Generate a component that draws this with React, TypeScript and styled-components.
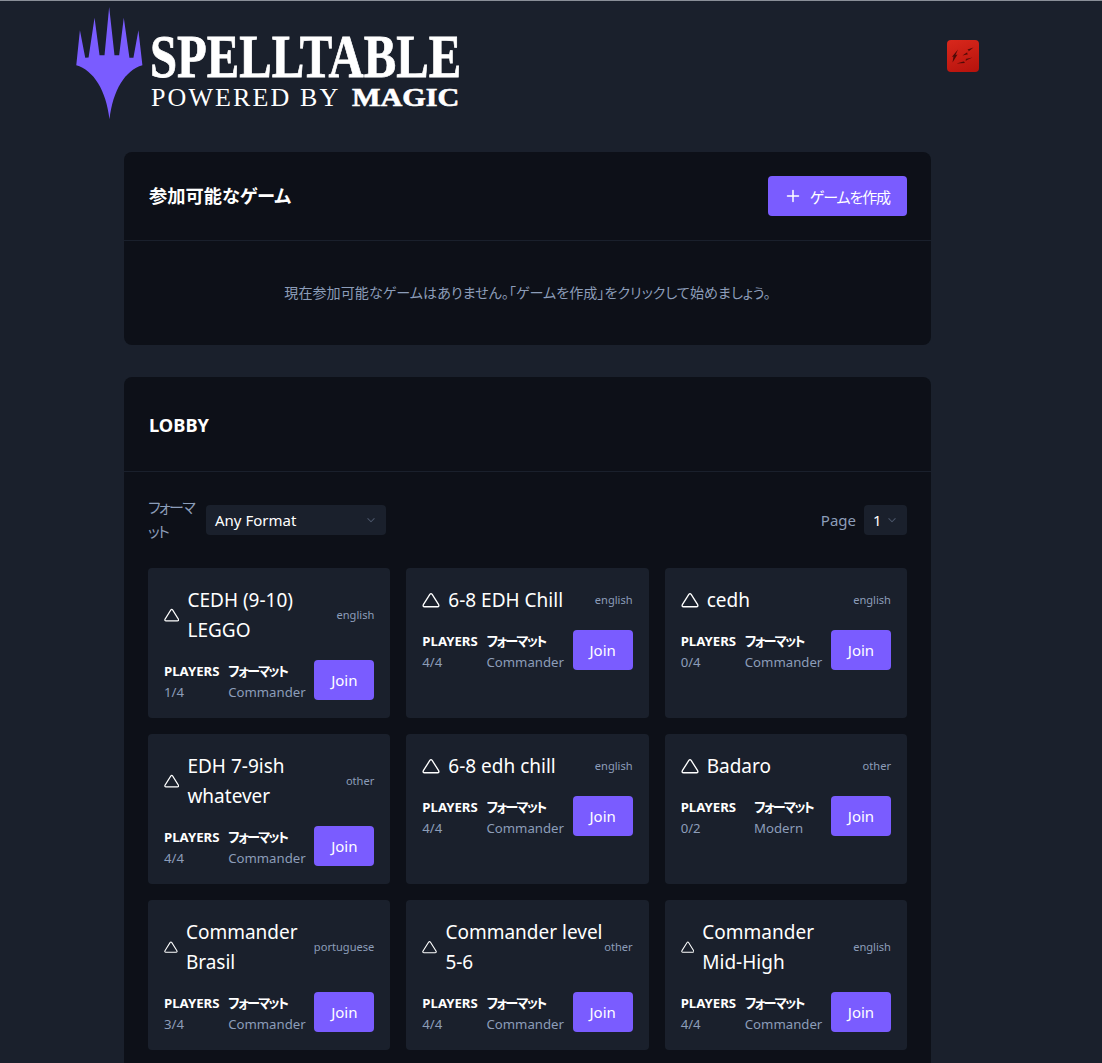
import { createGlobalStyle, styled } from "styled-components";

const FONT = `"Noto Sans", "Noto Sans CJK JP", sans-serif`;
const MUTED = "#8c9db9";

type Game = {
  title: string;
  language: string;
  players: string;
  format: string;
};

const games: Game[] = [
  { title: "CEDH (9-10) LEGGO", language: "english", players: "1/4", format: "Commander" },
  { title: "6-8 EDH Chill", language: "english", players: "4/4", format: "Commander" },
  { title: "cedh", language: "english", players: "0/4", format: "Commander" },
  { title: "EDH 7-9ish whatever", language: "other", players: "4/4", format: "Commander" },
  { title: "6-8 edh chill", language: "english", players: "4/4", format: "Commander" },
  { title: "Badaro", language: "other", players: "0/2", format: "Modern" },
  { title: "Commander Brasil", language: "portuguese", players: "3/4", format: "Commander" },
  { title: "Commander level 5-6", language: "other", players: "4/4", format: "Commander" },
  { title: "Commander Mid-High", language: "english", players: "4/4", format: "Commander" },
];

function Chevron() {
  return (
    <ChevronIcon viewBox="0 0 20 20" fill="none">
      <path d="M5.5 8l4.5 4.5L14.5 8" stroke="#4a5568" strokeWidth="1.5" strokeLinecap="round" strokeLinejoin="round" />
    </ChevronIcon>
  );
}

export default function App() {
  return (
    <>
      <GlobalStyle />
      <Page>
        <Header>
          <Logo>
            <LogoMark viewBox="18 10 200 340">
              <path
                d="M29 80 L45 163 L55 162 L73 42 L88 155 L103 155 L117 10 L133 155 L147 155 L161 42 L178 163 L190 163 L205 80 L217 185 C165 200 128 260 118 348 C108 260 70 200 18 185 Z"
                fill="#7a5cff"
              />
            </LogoMark>
            <LogoText>
              <LogoTitle>SPELLTABLE</LogoTitle>
              <LogoSub>
                POWERED BY <LogoMagic>MAGIC</LogoMagic>
              </LogoSub>
            </LogoText>
          </Logo>
          <Avatar>
            <svg viewBox="0 0 32 32" width="32" height="32">
              <g fill="#4f0a07">
                <path d="M11 9.5 L8.5 15 L10.5 14.5 L5.5 22.5 L6.5 16.5 L4.8 17 Z" />
                <path d="M26.5 7.5 L20.5 9.5 L22 11 L15.5 15.5 L21 14.2 L19.8 12.8 Z" />
                <path d="M25.5 17.5 L18.5 19 L20 20.5 L9.5 23.5 L18 23 L16.8 21.6 Z" />
              </g>
            </svg>
          </Avatar>
        </Header>

        <Main>
          <Panel>
            <PanelHeader>
              <PanelTitle>参加可能なゲーム</PanelTitle>
              <CreateButton>
                <svg viewBox="0 0 16 16" width="16" height="16" fill="none">
                  <path d="M8 2.5v11M2.5 8h11" stroke="#fff" strokeWidth="1.5" strokeLinecap="round" />
                </svg>
                ゲームを作成
              </CreateButton>
            </PanelHeader>
            <EmptyMessage>現在参加可能なゲームはありません。「ゲームを作成」をクリックして始めましょう。</EmptyMessage>
          </Panel>

          <Panel>
            <LobbyHeader>
              <PanelTitle>LOBBY</PanelTitle>
            </LobbyHeader>
            <LobbyBody>
              <Filters>
                <FormatFilter>
                  <FilterLabel>フォーマット</FilterLabel>
                  <FormatSelect>
                    Any Format
                    <Chevron />
                  </FormatSelect>
                </FormatFilter>
                <PageFilter>
                  <PageLabel>Page</PageLabel>
                  <PageSelect>
                    1
                    <Chevron />
                  </PageSelect>
                </PageFilter>
              </Filters>
              <GameGrid>
                {games.map((game) => (
                  <GameCard key={game.title}>
                    <CardTop>
                      <Triangle viewBox="0 0 20 18" fill="none">
                        <path
                          d="M8.7 2.7 Q10 0.9 11.3 2.7 L18.6 14.3 Q19.6 16.4 17.3 16.6 H2.7 Q0.4 16.4 1.4 14.3 Z"
                          stroke="#fff"
                          strokeWidth="1.5"
                          strokeLinejoin="round"
                        />
                      </Triangle>
                      <GameTitle>{game.title}</GameTitle>
                      <Language>{game.language}</Language>
                    </CardTop>
                    <CardBottom>
                      <Stat>
                        <StatLabel>PLAYERS</StatLabel>
                        <StatValue>{game.players}</StatValue>
                      </Stat>
                      <Stat>
                        <StatLabel $tight>フォーマット</StatLabel>
                        <StatValue>{game.format}</StatValue>
                      </Stat>
                      <JoinButton>Join</JoinButton>
                    </CardBottom>
                  </GameCard>
                ))}
              </GameGrid>
            </LobbyBody>
          </Panel>
        </Main>
      </Page>
    </>
  );
}

/** styles */

const GlobalStyle = createGlobalStyle`
  html, body {
    margin: 0;
    height: 1063px;
    overflow: hidden;
    background: #1a202c;
  }

  body {
    border-top: 1px solid #8a8f98;
    box-sizing: border-box;
    font-family: ${FONT};
    font-feature-settings: "palt";
    color: #fff;
  }

  button {
    font-family: inherit;
    font-feature-settings: inherit;
    border: 0;
    cursor: pointer;
  }
`;

const Page = styled.div`
  display: flex;
  flex-direction: column;
  padding: 0 123px 0 76px;
`;

const Header = styled.header`
  display: flex;
  align-items: flex-start;
  justify-content: space-between;
  height: 151px;
  box-sizing: border-box;
  padding-top: 6px;
`;

const Logo = styled.div`
  display: flex;
  gap: 8px;
`;

const LogoMark = styled.svg`
  width: 67px;
  height: 113px;
`;

const LogoText = styled.div`
  display: flex;
  flex-direction: column;
  width: 309px;
  padding-top: 22px;
`;

const LogoTitle = styled.div`
  font-family: "Liberation Serif", serif;
  font-weight: 700;
  font-size: 62px;
  line-height: 54px;
  white-space: nowrap;
  -webkit-text-stroke: 0.8px #fff;
  transform: translateX(-1px) scaleX(0.785);
  transform-origin: left center;
`;

const LogoSub = styled.div`
  font-family: "Liberation Serif", serif;
  font-size: 26px;
  line-height: 30px;
  letter-spacing: 2.1px;
  white-space: nowrap;
`;

const LogoMagic = styled.span`
  display: inline-block;
  margin-left: 4px;
  font-weight: 700;
  letter-spacing: 0;
  -webkit-text-stroke: 0.6px #fff;
  transform: scaleX(1.16);
  transform-origin: left center;
`;

const Avatar = styled.div`
  width: 32px;
  height: 32px;
  margin-top: 33px;
  border-radius: 4px;
  background: linear-gradient(160deg, #d9281c, #b5120c);
`;

const Main = styled.main`
  display: flex;
  flex-direction: column;
  gap: 32px;
  width: 807px;
  margin-left: 48px;
`;

const Panel = styled.section`
  background: #0d1018;
  border-radius: 8px;
`;

const PanelHeader = styled.div`
  display: flex;
  align-items: center;
  justify-content: space-between;
  height: 88px;
  padding: 0 24px 0 25px;
  border-bottom: 1px solid #1a202c;
`;

const LobbyHeader = styled(PanelHeader)`
  height: 92px;
  padding-top: 2px;
`;

const PanelTitle = styled.h2`
  margin: 0;
  font-size: 18.25px;
  line-height: 28px;
  font-weight: 700;
`;

const CreateButton = styled.button`
  display: flex;
  align-items: center;
  gap: 9px;
  height: 40px;
  padding: 0 17px;
  border-radius: 4px;
  background: #7a5cff;
  color: #fff;
  font-size: 15px;
  letter-spacing: -1.1px;
`;

const EmptyMessage = styled.p`
  margin: 0;
  padding: 40px 24px;
  text-align: center;
  font-size: 14.1px;
  line-height: 24px;
  color: ${MUTED};
`;

const LobbyBody = styled.div`
  padding: 24px;
`;

const Filters = styled.div`
  display: flex;
  align-items: center;
  justify-content: space-between;
  margin-bottom: 24px;
`;

const FormatFilter = styled.div`
  display: flex;
  align-items: center;
  gap: 8px;
`;

const FilterLabel = styled.label`
  width: 50px;
  margin: -1px 0 1px;
  font-size: 15px;
  line-height: 24px;
  letter-spacing: -1.6px;
  line-break: loose;
  color: ${MUTED};
`;

const FormatSelect = styled.div`
  display: flex;
  align-items: center;
  justify-content: space-between;
  width: 180px;
  height: 30px;
  box-sizing: border-box;
  padding: 0 8px 0 9px;
  border-radius: 4px;
  background: #1a202c;
  font-size: 15px;
`;

const PageFilter = styled.div`
  display: flex;
  align-items: center;
  gap: 8px;
`;

const PageLabel = styled.span`
  font-size: 15px;
  color: ${MUTED};
`;

const PageSelect = styled(FormatSelect)`
  width: 43px;
`;

const ChevronIcon = styled.svg`
  width: 14px;
  height: 14px;
`;

const GameGrid = styled.div`
  display: grid;
  grid-template-columns: repeat(3, minmax(0, 1fr));
  gap: 16px;
`;

const GameCard = styled.article`
  display: flex;
  flex-direction: column;
  gap: 12.5px;
  height: 150px;
  box-sizing: border-box;
  padding: 17px 16px 0;
  border-radius: 4px;
  background: #1a202c;
`;

const CardTop = styled.div`
  display: flex;
  align-items: center;
`;

const Triangle = styled.svg`
  flex: 0 1 18px;
  min-width: 0;
  height: 16px;
  margin-right: 8px;
`;

const GameTitle = styled.h3`
  flex: 0 1 auto;
  margin: 0;
  font-size: 19px;
  line-height: 30px;
  font-weight: 400;
`;

const Language = styled.span`
  margin-left: auto;
  padding-bottom: 2px;
  font-size: 11.1px;
  color: ${MUTED};
`;

const CardBottom = styled.div`
  display: flex;
  align-items: center;
  justify-content: space-between;
`;

const Stat = styled.div`
  display: flex;
  flex-direction: column;
  min-width: 0;
  padding-top: 3px;
  font-size: 13.2px;
  line-height: 21px;
`;

const StatLabel = styled.span<{ $tight?: boolean }>`
  font-weight: 700;
  letter-spacing: ${(p) => (p.$tight ? "-1.8px" : "0")};
  white-space: nowrap;
`;

const StatValue = styled.span`
  color: ${MUTED};
`;

const JoinButton = styled.button`
  flex: none;
  width: 60px;
  height: 40px;
  border-radius: 4px;
  background: #7a5cff;
  color: #fff;
  font-size: 15px;
`;
